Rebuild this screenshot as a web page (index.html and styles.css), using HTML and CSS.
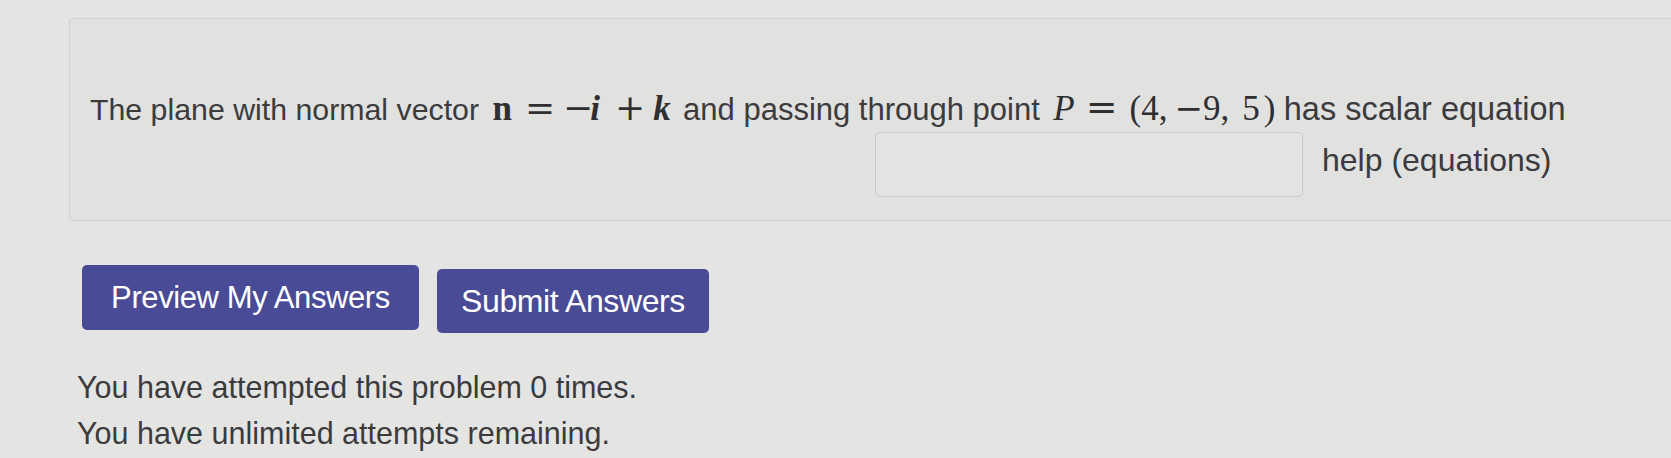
FILE: index.html
```html
<!DOCTYPE html>
<html>
<head>
<meta charset="utf-8">
<link rel="stylesheet" href="styles.css">
</head>
<body>
<div class="page">
  <div class="problem">
    <div class="line1">The plane with normal vector <span class="math"><b class="bu">n</b><span class="op op-eq">=</span><span class="op op-neg">−</span><b class="bi bi-i">i</b><span class="op op-plus">+</span><b class="bi bi-k">k</b></span> <span class="mid">and passing through point</span> <span class="math"><i class="it">P</i><span class="op op-eq2">=</span><span class="paren">(</span>4,<span class="op op-neg2">−</span>9,<span class="num5">5</span>)</span> <span class="tail">has scalar equation</span></div>
    <div class="line2">
      <div class="answer"></div>
      <a class="help">help (equations)</a>
    </div>
  </div>
  <div class="buttons">
    <button class="btn btn-preview">Preview My Answers</button>
    <button class="btn btn-submit">Submit Answers</button>
  </div>
  <div class="attempts">
    <p>You have attempted this problem 0 times.</p>
    <p>You have unlimited attempts remaining.</p>
  </div>
</div>
</body>
</html>
```
FILE: styles.css
```css
html, body {
  margin: 0;
  padding: 0;
  background: #e4e4e3;
  overflow: hidden;
}
.page {
  width: 1671px;
  height: 458px;
  overflow: hidden;
  font-family: "Liberation Sans", Arial, sans-serif;
  color: #3b3b3d;
  padding-top: 18px;
  box-sizing: border-box;
}
.problem {
  margin-left: 69px;
  width: 1640px;
  height: 203px;
  box-sizing: border-box;
  background: #e1e1e0;
  border: 1px solid #d0d0cf;
  border-radius: 4px;
  padding: 68px 0 0 20px;
}
.line1 {
  font-size: 30.3px;
  line-height: 40px;
  white-space: nowrap;
}
.mid { font-size: 31px; }
.tail { font-size: 32.5px; }
.math {
  font-family: "Liberation Serif", "Times New Roman", serif;
  font-size: 35px;
  color: #2f2f31;
}
.bu { font-weight: bold; margin-left: 5px; }
.bi { font-weight: bold; font-style: italic; }
.bi-i { margin-left: -3px; }
.bi-k { margin-left: 8px; margin-right: 4px; }
.it { font-style: italic; margin-left: 5px; }
.op {
  font-family: "DejaVu Serif", serif;
  font-weight: normal;
  font-size: 34px;
}
.op-eq { font-size: 36px; margin-left: 13px; }
.op-neg { font-size: 36px; margin-left: 8px; }
.op-plus { font-size: 36px; margin-left: 15px; }
.op-eq2 { font-size: 38px; margin-left: 11px; }
.paren { margin-left: 12px; }
.op-neg2 { margin-left: 7px; }
.num5 { margin-left: 13px; margin-right: 4px; }
.line2 {
  display: flex;
  align-items: flex-start;
  margin-top: 2px;
  margin-left: 785px;
}
.answer {
  width: 428px;
  height: 65px;
  box-sizing: border-box;
  border: 1.5px solid #c8c8c8;
  border-radius: 5px;
  background: #e3e3e2;
}
.help {
  margin-left: 19px;
  font-size: 32px;
  line-height: 40px;
  margin-top: 8px;
  color: #3b3b3f;
}
.buttons {
  display: flex;
  align-items: flex-start;
  gap: 18px;
  margin: 44px 0 0 82px;
}
.btn {
  border: none;
  border-radius: 5px;
  background: #4a4b97;
  color: #ffffff;
  font-family: "Liberation Sans", Arial, sans-serif;
  font-size: 31px;
  letter-spacing: -0.4px;
  padding: 0;
}
.btn-preview { width: 337px; height: 65px; }
.btn-submit { width: 272px; height: 64px; margin-top: 4px; font-size: 32px; }
.attempts {
  margin: 31px 0 0 77px;
  font-size: 30.5px;
  line-height: 46px;
}
.attempts p { margin: 0; }
```
